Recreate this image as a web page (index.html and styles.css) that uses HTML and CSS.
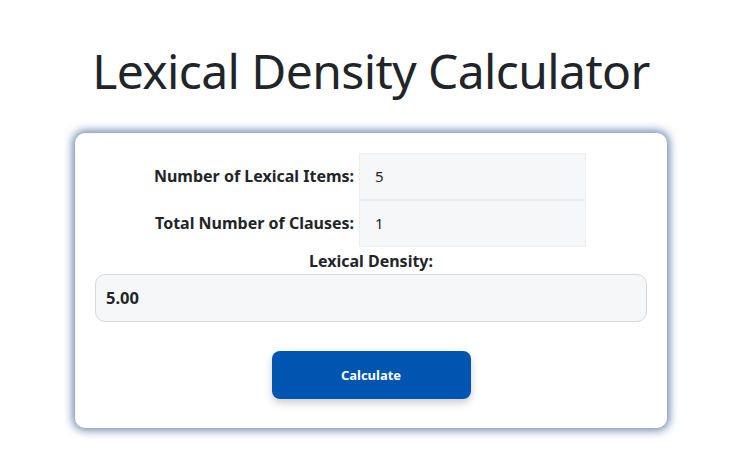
FILE: index.html
```html
<!DOCTYPE html>
<html lang="en">
<head>
  <meta charset="UTF-8">
  <meta name="viewport" content="width=device-width, initial-scale=1.0">
  <title>Lexical Density Calculator</title>
  <link rel="stylesheet" href="styles.css">
</head>
<body>
  <h1>Lexical Density Calculator</h1>
  <div class="card">
    <table class="inputs">
      <tr>
        <td class="label">Number of Lexical Items:</td>
        <td class="field"><input type="text" value="5"></td>
      </tr>
      <tr>
        <td class="label">Total Number of Clauses:</td>
        <td class="field"><input type="text" value="1"></td>
      </tr>
    </table>
    <div class="result-label">Lexical Density:</div>
    <div class="result">5.00</div>
    <div class="actions">
      <button class="calc-btn">Calculate</button>
    </div>
  </div>
</body>
</html>
```
FILE: styles.css
```css
body {
  font-family: "Noto Sans", "Open Sans", sans-serif;
  margin: 0;
  padding: 0 0 40px;
  min-height: 100vh;
  box-sizing: border-box;
  background-color: #fff;
  color: #212529;
  display: flex;
  flex-direction: column;
  align-items: center;
}

h1 {
  font-weight: 400;
  font-size: 48px;
  margin: 42px 0 33px;
  line-height: 1.2;
  letter-spacing: -0.6px;
}

.card {
  width: 592px;
  box-sizing: border-box;
  padding: 20px 20px 29px;
  border-radius: 10px;
  background: #fff;
  box-shadow: 0 0 10px 2px rgba(55, 95, 145, 0.8);
  display: flex;
  flex-direction: column;
  align-items: center;
}

.inputs {
  border-collapse: collapse;
  margin-left: -2px;
}

.label {
  text-align: right;
  font-weight: 700;
  font-size: 16px;
  padding: 0 5px 0 0;
}

.field {
  padding: 0;
}

.field input {
  width: 227px;
  height: 47px;
  box-sizing: border-box;
  border: 1px solid #eceef0;
  background: #f6f7f8;
  font-family: inherit;
  font-size: 15px;
  color: #212529;
  padding: 0 15px;
  display: block;
  outline: none;
}

.result-label {
  font-weight: 700;
  font-size: 16px;
  margin-top: 3px;
}

.result {
  align-self: stretch;
  margin-top: 2px;
  height: 48px;
  box-sizing: border-box;
  border: 1px solid #d6d8db;
  border-radius: 10px;
  background: #f6f7f8;
  font-weight: 700;
  font-size: 16.5px;
  padding: 0 10px;
  display: flex;
  align-items: center;
}

.actions {
  margin-top: 29px;
}

.calc-btn {
  width: 199px;
  height: 48px;
  border: none;
  border-radius: 8px;
  background: #0055b0;
  color: #fff;
  font-family: inherit;
  font-weight: 700;
  font-size: 13px;
  box-shadow: 0 4px 8px rgba(0, 0, 0, 0.2);
  cursor: pointer;
}
```
